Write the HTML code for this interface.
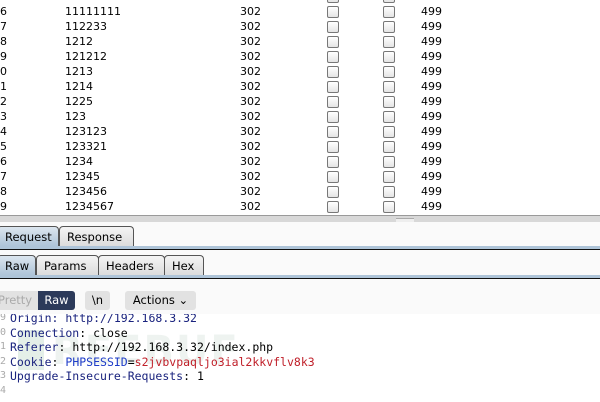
<!DOCTYPE html><html><head><style>
body{margin:0;width:600px;height:402px;overflow:hidden;background:#fafafa;font-family:"DejaVu Sans","Liberation Sans",sans-serif;font-size:11px;color:#000;position:relative}
.tbl{position:absolute;left:0;top:0;width:600px;height:215px;background:#fff;border-bottom:1px solid #9a9a9a;overflow:hidden}
.r{position:absolute;left:0;height:15px;width:600px}
.r span{position:absolute;top:0}
.cb{position:absolute;width:10px;height:10px;border:1px solid #777;border-radius:2px;background:linear-gradient(#fff,#e4e4e4);top:1px}
.tab{position:absolute;height:20px;border:1px solid #555;border-bottom:none;border-radius:4px 4px 0 0;background:linear-gradient(#f4f4f4,#dcdcdc);font-size:11.5px;line-height:20px;padding:0 7px;box-sizing:border-box}
.sel{background:linear-gradient(#dce6ef,#aec4d8)}
.mono{position:absolute;left:0;font-family:"DejaVu Sans Mono","Liberation Mono",monospace;font-size:11.5px;white-space:pre}
.k{color:#1a237e}
</style></head><body>
<div class="tbl">
<script>
const rows=[["5","111111"],["6","11111111"],["7","112233"],["8","1212"],["9","121212"],["0","1213"],["1","1214"],["2","1225"],["3","123"],["4","123123"],["5","123321"],["6","1234"],["7","12345"],["8","123456"],["9","1234567"]];
rows.forEach((r,i)=>{const y=-10+15*i;document.write(`<div class="r" style="top:${y}px"><span style="left:0">${r[0]}</span><span style="left:65px">${r[1]}</span><span style="left:240px">302</span><div class="cb" style="left:327px"></div><div class="cb" style="left:383px"></div><span style="left:421px">499</span></div>`)});
</script>
</div>
<div style="position:absolute;top:216px;left:0;width:600px;height:6px;background:#d8d8d8"></div>
<div style="position:absolute;top:218px;left:396px;width:18px;height:3px;background:#eee;border-top:1px solid #aaa"></div>
<div class="tab sel" style="left:-3px;top:226px;width:62px;padding-left:7px">Request</div>
<div class="tab" style="left:59px;top:226px;width:75px">Response</div>
<div style="position:absolute;top:246px;left:0;width:600px;height:3px;background:#aec4d8;border-bottom:1px solid #111"></div>
<div class="tab sel" style="left:-3px;top:255px;width:39px;padding-left:7px">Raw</div>
<div class="tab" style="left:36px;top:255px;width:63px">Params</div>
<div class="tab" style="left:98px;top:255px;width:67px">Headers</div>
<div class="tab" style="left:164px;top:255px;width:40px">Hex</div>
<div style="position:absolute;top:275px;left:0;width:600px;height:3px;background:#aec4d8;border-bottom:1px solid #111"></div>
<div style="position:absolute;top:291px;left:-2px;width:40px;height:19px;background:#e2e2e2;border-radius:3px 0 0 3px;color:#aaa;line-height:19px;font-size:11.5px">Pretty</div>
<div style="position:absolute;top:291px;left:38px;width:37px;height:19px;background:#2c3a5a;border-radius:0 3px 3px 0;color:#fff;line-height:19px;text-align:center;font-size:11.5px">Raw</div>
<div style="position:absolute;top:291px;left:85px;width:25px;height:19px;background:#e2e2e2;border-radius:3px;line-height:19px;text-align:center;font-size:11.5px">\n</div>
<div style="position:absolute;top:291px;left:125px;width:71px;height:19px;background:#e2e2e2;border-radius:3px;line-height:19px;text-align:center;font-size:11.5px">Actions ⌄</div>
<div style="position:absolute;top:314px;left:0;width:600px;height:88px;background:#fff;overflow:hidden">
<div style="position:absolute;top:14px;left:52px;font:bold 40px 'DejaVu Sans',sans-serif;color:#eef3f0;letter-spacing:2px">REEBUF</div>
<div style="position:absolute;top:16px;left:18px;width:26px;height:40px;background:#e4efe8"></div>
<div class="mono" style="top:-3px;color:#aaa;font-size:10px;line-height:14.5px">9
0
1
2
3
4</div>
<div class="mono" style="top:-3px;left:10px;line-height:14.5px"><span class="k">Origin: http://192.168.3.32</span>
<span class="k">Connection</span>: close
<span class="k">Referer</span>: http://192.168.3.32/index.php
<span class="k">Cookie</span>: <span style="color:#1e3cc8">PHPSESSID</span>=<span style="color:#c0202a">s2jvbvpaqljo3ial2kkvflv8k3</span>
<span class="k">Upgrade-Insecure-Requests</span>: 1

<span style="color:#c0202a">          usernam</span></div>
</div>
</body></html>
